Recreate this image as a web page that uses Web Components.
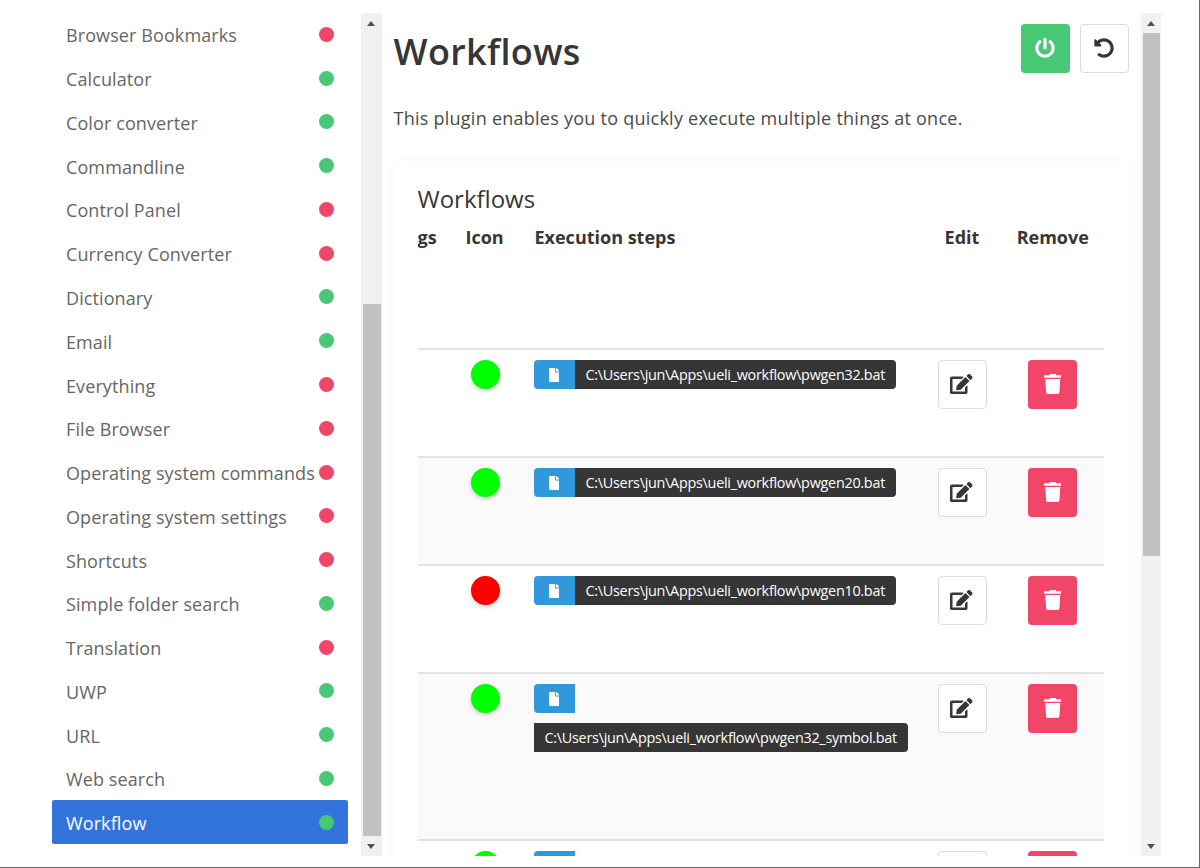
<!DOCTYPE html>
<html lang="en">
<head>
<meta charset="utf-8">
<title>Workflows</title>
<style>
  html, body { margin: 0; padding: 0; background: #fff; }
  body { font-family: "Open Sans", "Liberation Sans", sans-serif; overflow: hidden; }
</style>
</head>
<body>
<settings-app>
  <plugin-menu slot="menu">
    <menu-item status="off">Browser Bookmarks</menu-item>
    <menu-item status="on">Calculator</menu-item>
    <menu-item status="on">Color converter</menu-item>
    <menu-item status="on">Commandline</menu-item>
    <menu-item status="off">Control Panel</menu-item>
    <menu-item status="off">Currency Converter</menu-item>
    <menu-item status="on">Dictionary</menu-item>
    <menu-item status="on">Email</menu-item>
    <menu-item status="off">Everything</menu-item>
    <menu-item status="off">File Browser</menu-item>
    <menu-item status="off">Operating system commands</menu-item>
    <menu-item status="off">Operating system settings</menu-item>
    <menu-item status="off">Shortcuts</menu-item>
    <menu-item status="on">Simple folder search</menu-item>
    <menu-item status="off">Translation</menu-item>
    <menu-item status="on">UWP</menu-item>
    <menu-item status="on">URL</menu-item>
    <menu-item status="on">Web search</menu-item>
    <menu-item status="on" active>Workflow</menu-item>
  </plugin-menu>
  <fake-scrollbar slot="menu-bar" offset="271" size="532"></fake-scrollbar>
  <plugin-page slot="main" heading="Workflows" description="This plugin enables you to quickly execute multiple things at once.">
    <workflow-card heading="Workflows">
      <workflow-row color="#00ff00" path="C:\Users\jun\Apps\ueli_workflow\pwgen32.bat"></workflow-row>
      <workflow-row striped color="#00ff00" path="C:\Users\jun\Apps\ueli_workflow\pwgen20.bat"></workflow-row>
      <workflow-row color="#ff0000" path="C:\Users\jun\Apps\ueli_workflow\pwgen10.bat"></workflow-row>
      <workflow-row striped tall color="#00ff00" path="C:\Users\jun\Apps\ueli_workflow\pwgen32_symbol.bat"></workflow-row>
      <workflow-row color="#00ff00" path=""></workflow-row>
    </workflow-card>
  </plugin-page>
  <fake-scrollbar slot="main-bar" offset="0" size="523"></fake-scrollbar>
</settings-app>

<script>
const ICONS = {
  power: ['0 0 512 512', 'M400 54.1c63 45 104 118.6 104 201.9 0 136.8-110.8 247.7-247.5 248C120 504.3 8.2 393 8 256.4 7.9 173.1 48.9 99.3 111.8 54.2c11.7-8.3 28-4.8 35 7.7L162.6 90c5.9 10.5 3.1 23.8-6.6 31-41.5 30.8-68 79.6-68 134.9-.1 92.3 74.5 168.1 168 168.1 91.6 0 168.6-74.2 168-169.1-.3-51.8-24.7-101.8-68.1-134-9.7-7.2-12.4-20.5-6.5-30.9l15.8-28.1c7-12.4 23.2-16.1 34.8-7.8zM296 264V24c0-13.3-10.7-24-24-24h-32c-13.3 0-24 10.7-24 24v240c0 13.3 10.7 24 24 24h32c13.3 0 24-10.7 24-24z'],
  undo: ['0 0 512 512', 'M255.545 8c-66.269.119-126.438 26.233-170.86 68.685L48.971 40.971C33.851 25.851 8 36.559 8 57.941V192c0 13.255 10.745 24 24 24h134.059c21.382 0 32.09-25.851 16.971-40.971l-41.75-41.75c30.864-28.899 70.801-44.907 113.23-45.273 92.398-.798 170.283 73.977 169.484 169.442C423.236 348.009 349.816 424 256 424c-41.127 0-79.997-14.678-110.63-41.556-4.743-4.161-11.906-3.908-16.368.553L89.34 422.659c-4.872 4.872-4.631 12.815.482 17.433C133.798 479.813 192.074 504 256 504c136.966 0 247.999-111.033 248-247.998C504.001 119.193 392.354 7.755 255.545 8z'],
  edit: ['0 0 576 512', 'M402.6 83.2l90.2 90.2c3.8 3.8 3.8 10 0 13.8L274.4 405.6l-92.8 10.3c-12.4 1.4-22.9-9.1-21.5-21.5l10.3-92.8L388.8 83.2c3.8-3.8 10-3.8 13.8 0zm162-22.9l-48.8-48.8c-15.2-15.2-39.9-15.2-55.2 0l-35.4 35.4c-3.8 3.8-3.8 10 0 13.8l90.2 90.2c3.8 3.8 10 3.8 13.8 0l35.4-35.4c15.2-15.3 15.2-40 0-55.2zM384 346.2V448H64V128h229.8c3.2 0 6.2-1.3 8.5-3.5l40-40c7.6-7.6 2.2-20.5-8.5-20.5H48C21.5 64 0 85.5 0 112v352c0 26.5 21.5 48 48 48h352c26.5 0 48-21.5 48-48V306.2c0-10.7-12.9-16-20.5-8.5l-40 40c-2.2 2.3-3.5 5.3-3.5 8.5z'],
  trash: ['0 0 448 512', 'M432 32H312l-9.4-18.7A24 24 0 0 0 281.1 0H166.8a23.72 23.72 0 0 0-21.4 13.3L136 32H16A16 16 0 0 0 0 48v32a16 16 0 0 0 16 16h416a16 16 0 0 0 16-16V48a16 16 0 0 0-16-16zM53.2 467a48 48 0 0 0 47.9 45h245.8a48 48 0 0 0 47.9-45L416 128H32z'],
  file: ['0 0 384 512', 'M224 136V0H24C10.7 0 0 10.7 0 24v464c0 13.3 10.7 24 24 24h336c13.3 0 24-10.7 24-24V160H248c-13.2 0-24-10.8-24-24zm160-14.1v6.1H256V0h6.1c6.4 0 12.5 2.5 17 7l97.9 98c4.5 4.5 7 10.6 7 16.9z'],
};

const icon = (name, h) => {
  const [box, d] = ICONS[name];
  return `<svg viewBox="${box}" height="${h}" fill="currentColor" aria-hidden="true"><path d="${d}"/></svg>`;
};

class SettingsApp extends HTMLElement {
  constructor() {
    super();
    this.attachShadow({ mode: 'open' }).innerHTML = `
      <style>
        :host {
          display: grid;
          grid-template-columns: 361px 20.5px 759.5px 20px;
          height: 868px;
          box-sizing: border-box;
          padding-top: 13px;
          background: #fff;
          overflow: hidden;
          position: relative;
        }
        .clip { height: 843px; overflow: hidden; }
        .line { position: absolute; left: 0; right: 0; top: 867px; height: 1px; background: #6b6b6b; }
        .edge { position: absolute; top: 0; right: 0; bottom: 0; width: 1px; background: #6b6b6b; }
      </style>
      <div class="clip"><slot name="menu"></slot></div>
      <div class="clip"><slot name="menu-bar"></slot></div>
      <div class="clip"><slot name="main"></slot></div>
      <div class="clip"><slot name="main-bar"></slot></div>
      <div class="line"></div>
      <div class="edge"></div>`;
  }
}

class PluginMenu extends HTMLElement {
  constructor() {
    super();
    this.attachShadow({ mode: 'open' }).innerHTML = `
      <style>
        :host { display: block; padding: 0 13px 0 52px; margin-top: -.5px; }
      </style>
      <slot></slot>`;
  }
}

class MenuItem extends HTMLElement {
  constructor() {
    super();
    this.attachShadow({ mode: 'open' }).innerHTML = `
      <style>
        :host {
          display: flex;
          align-items: center;
          height: 43.78px;
          padding: 0 14px;
          box-sizing: border-box;
          border-radius: 2px;
          color: #666;
          font-size: 18px;
          letter-spacing: .1px;
          white-space: nowrap;
        }
        :host([active]) { background: #3273dc; color: #fff; }
        .label { flex: 1; min-width: 0; padding-top: 2px; }
        .dot { width: 15px; height: 15px; border-radius: 50%; flex: none; }
        :host([status="on"]) .dot { background: #48c774; }
        :host([status="off"]) .dot { background: #f14668; }
      </style>
      <span class="label"><slot></slot></span>
      <span class="dot"></span>`;
  }
}

class FakeScrollbar extends HTMLElement {
  connectedCallback() {
    const offset = this.getAttribute('offset') || 0;
    const size = this.getAttribute('size') || 100;
    this.attachShadow({ mode: 'open' }).innerHTML = `
      <style>
        :host {
          display: flex;
          flex-direction: column;
          width: 100%;
          height: 843px;
          background: #f1f1f1;
        }
        .arrow { height: 20px; flex: none; display: flex; align-items: center; justify-content: center; }
        .track { flex: 1; padding: 0 1px 0 2px; min-height: 0; }
        .thumb { background: #c1c1c1; height: ${size}px; margin-top: ${offset}px; }
        .up { width: 0; height: 0; border: 4px solid transparent; border-top: 0; border-bottom: 5px solid #505050; }
        .down { width: 0; height: 0; border: 4px solid transparent; border-bottom: 0; border-top: 5px solid #505050; }
      </style>
      <div class="arrow"><span class="up"></span></div>
      <div class="track"><div class="thumb"></div></div>
      <div class="arrow"><span class="down"></span></div>`;
  }
}

class PluginPage extends HTMLElement {
  connectedCallback() {
    this.attachShadow({ mode: 'open' }).innerHTML = `
      <style>
        :host { display: block; padding: 0 12px; color: #363636; }
        header { display: flex; justify-content: space-between; height: 60px; padding-top: 11px; }
        h1 { margin: 0; font-size: 36px; line-height: 56px; font-weight: 600; letter-spacing: .35px; }
        .actions { display: flex; gap: 10px; }
        p { margin: 0; height: 57px; padding-top: 20px; font-size: 18px; letter-spacing: .25px; line-height: 28px; color: #4a4a4a; }
      </style>
      <header>
        <h1>${this.getAttribute('heading')}</h1>
        <div class="actions">
          <icon-button kind="success" icon="power"></icon-button>
          <icon-button icon="undo"></icon-button>
        </div>
      </header>
      <p>${this.getAttribute('description')}</p>
      <slot></slot>`;
  }
}

class IconButton extends HTMLElement {
  connectedCallback() {
    const name = this.getAttribute('icon');
    this.attachShadow({ mode: 'open' }).innerHTML = `
      <style>
        :host {
          display: flex;
          align-items: center;
          justify-content: center;
          width: 49px;
          height: 49px;
          padding: 0 1px 1px 0;
          box-sizing: border-box;
          border: 1px solid #dbdbdb;
          border-radius: 4px;
          background: #fff;
          color: #363636;
        }
        :host([kind="success"]) { background: #48c774; border-color: transparent; color: #fff; }
        :host([kind="danger"]) { background: #f14668; border-color: transparent; color: #fff; }
      </style>
      ${icon(name, 20)}`;
  }
}

class WorkflowCard extends HTMLElement {
  connectedCallback() {
    this.attachShadow({ mode: 'open' }).innerHTML = `
      <style>
        :host {
          display: block;
          padding: 20px 25px 24px 24px;
          border-radius: 8px;
          background: #fff;
          box-shadow: 0 0 14px rgba(10,10,10,.035);
          color: #363636;
        }
        h2 { margin: 0; font-size: 24px; line-height: 36px; font-weight: 400; }
        .table { overflow: hidden; }
        .head {
          display: grid;
          grid-template-columns: 38px 69px 410px 55px 1fr;
          height: 131px;
          box-sizing: border-box;
          padding-top: 6px;
          align-items: start;
          font-size: 18px;
          font-weight: 700;
          line-height: 28px;
        }
        .head span:first-child { text-align: right; overflow: hidden; white-space: nowrap; padding-right: 19px; }
        .head .icon-col { padding-left: 10px; }
        .head .steps { padding-left: 10px; }
        .head .edit { text-align: center; }
        .head .remove { text-align: center; padding-left: 12px; }
      </style>
      <h2>${this.getAttribute('heading')}</h2>
      <div class="table">
        <div class="head">
          <span>gs</span>
          <span class="icon-col">Icon</span>
          <span class="steps">Execution steps</span>
          <span class="edit">Edit</span>
          <span class="remove">Remove</span>
        </div>
        <slot></slot>
      </div>`;
  }
}

class WorkflowRow extends HTMLElement {
  connectedCallback() {
    const path = this.getAttribute('path');
    this.attachShadow({ mode: 'open' }).innerHTML = `
      <style>
        :host {
          display: grid;
          grid-template-columns: 38px 69px 410px 55px 1fr;
          height: 108px;
          box-sizing: border-box;
          padding-top: 10px;
          border-top: 2px solid #e2e2e2;
          align-items: start;
        }
        :host([striped]) { background: #fafafa; }
        :host([tall]) { height: 166.5px; }
        .color { grid-column: 2; justify-self: start; margin-left: 15px; width: 29px; height: 29px; border-radius: 50%; box-shadow: 0 2px 4px rgba(0,0,0,.2); }
        .steps { display: flex; flex-wrap: wrap; row-gap: 10px; padding-left: 9px; padding-right: 18px; }
        .kind { width: 41px; height: 29px; background: #3298dc; color: #fff; display: flex; align-items: center; justify-content: center; border-radius: 4px 0 0 4px; }
        .path { height: 29px; padding: 0 11px; display: flex; align-items: center; background: #363636; color: #fff; font-size: 14.4px; letter-spacing: -.27px; white-space: nowrap; border-radius: 0 4px 4px 0; }
        .cell { justify-self: center; }
      </style>
      <div class="color" style="background:${this.getAttribute('color')}"></div>
      <div class="steps">
        <span class="kind">${icon('file', 14)}</span>
        ${path ? `<span class="path">${path}</span>` : ''}
      </div>
      <icon-button class="cell" icon="edit"></icon-button>
      <icon-button class="cell" kind="danger" icon="trash" style="margin-left:12px"></icon-button>`;
  }
}

customElements.define('settings-app', SettingsApp);
customElements.define('plugin-menu', PluginMenu);
customElements.define('menu-item', MenuItem);
customElements.define('fake-scrollbar', FakeScrollbar);
customElements.define('plugin-page', PluginPage);
customElements.define('icon-button', IconButton);
customElements.define('workflow-card', WorkflowCard);
customElements.define('workflow-row', WorkflowRow);
</script>
</body>
</html>
